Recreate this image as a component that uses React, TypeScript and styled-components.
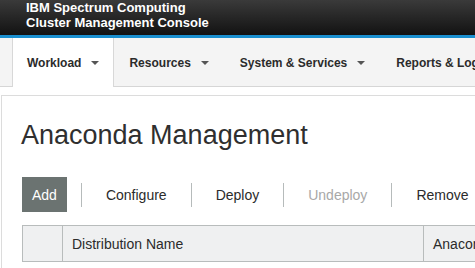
import React from "react";
import styled, { createGlobalStyle } from "styled-components";

const GlobalStyle = createGlobalStyle`
  body {
    margin: 0;
    overflow: hidden;
    background: #fff;
    font-family: "Liberation Sans", Arial, sans-serif;
  }
`;

const Header = styled.header`
  height: 35px;
  padding-left: 26px;
  background: linear-gradient(#3a3a3a, #121212);
  border-bottom: 3px solid #1a8fcf;
  color: #fff;
  font-size: 13px;
  font-weight: bold;
  line-height: 15px;
`;

const NavBar = styled.nav`
  display: flex;
  align-items: stretch;
  height: 48px;
  padding-left: 12px;
  background: #f4f4f4;
  border-bottom: 1px solid #d6d6d6;
  white-space: nowrap;
`;

const Tab = styled.div<{ active?: boolean }>`
  display: flex;
  align-items: center;
  padding: 0 14px;
  font-size: 12px;
  font-weight: bold;
  color: #2b2b2b;
  background: ${(p) => (p.active ? "#fff" : "transparent")};
  border-left: 1px solid ${(p) => (p.active ? "#d8d8d8" : "transparent")};
  border-right: 1px solid ${(p) => (p.active ? "#d8d8d8" : "transparent")};
  margin-bottom: -1px;
`;

const Caret = styled.span`
  width: 0;
  height: 0;
  margin-left: 10px;
  border-left: 4px solid transparent;
  border-right: 4px solid transparent;
  border-top: 4px solid #555;
`;

const NavSep = styled.span`
  align-self: center;
  width: 1px;
  height: 11px;
  margin-right: 1px;
  background: #d3d6dc;
`;

const Panel = styled.main`
  width: 720px;
  margin: 8px 0 0 1px;
  padding: 23px 20px 0;
  border: 1px solid #dcdcdc;
  border-bottom: none;
  height: 200px;
`;

const Title = styled.h1`
  margin: 0 0 26px -1px;
  font-size: 27px;
  font-weight: normal;
  line-height: 32px;
  color: #2f2f2f;
`;

const Toolbar = styled.div`
  display: flex;
  align-items: center;
  height: 35px;
  margin-bottom: 13px;
  font-size: 14px;
`;

const AddButton = styled.div`
  display: flex;
  align-items: center;
  height: 35px;
  padding: 0 10px;
  margin-right: 14px;
  background: #6b7371;
  color: #fff;
`;

const ToolItem = styled.div<{ disabled?: boolean }>`
  padding: 0 24px;
  color: ${(p) => (p.disabled ? "#a8a8a8" : "#2b2b2b")};
`;

const ToolSep = styled.span`
  width: 1px;
  height: 24px;
  background: #b6bbbb;
`;

const Table = styled.div`
  display: grid;
  grid-template-columns: 39px 361px 300px;
  height: 35px;
  border: 1px solid #b8bcbc;
  background: #eff0f1;
  font-size: 14px;
  color: #2b2b2b;
`;

const HeadCell = styled.div`
  display: flex;
  align-items: center;
  padding-left: 9px;
  border-left: 1px solid #b8bcbc;
  &:first-child {
    border-left: none;
  }
`;

export default function App() {
  return (
    <>
      <GlobalStyle />
      <Header>
        <div>IBM Spectrum Computing</div>
        <div>Cluster Management Console</div>
      </Header>
      <NavBar>
        <Tab active>
          Workload
          <Caret />
        </Tab>
        <Tab>
          Resources
          <Caret />
        </Tab>
        <NavSep />
        <Tab>
          System &amp; Services
          <Caret />
        </Tab>
        <NavSep />
        <Tab>Reports &amp; Logs</Tab>
      </NavBar>
      <Panel>
        <Title>Anaconda Management</Title>
        <Toolbar>
          <AddButton>Add</AddButton>
          <ToolSep />
          <ToolItem>Configure</ToolItem>
          <ToolSep />
          <ToolItem>Deploy</ToolItem>
          <ToolSep />
          <ToolItem disabled>Undeploy</ToolItem>
          <ToolSep />
          <ToolItem>Remove</ToolItem>
        </Toolbar>
        <Table>
          <HeadCell />
          <HeadCell>Distribution Name</HeadCell>
          <HeadCell>Anaconda Version</HeadCell>
        </Table>
      </Panel>
    </>
  );
}
